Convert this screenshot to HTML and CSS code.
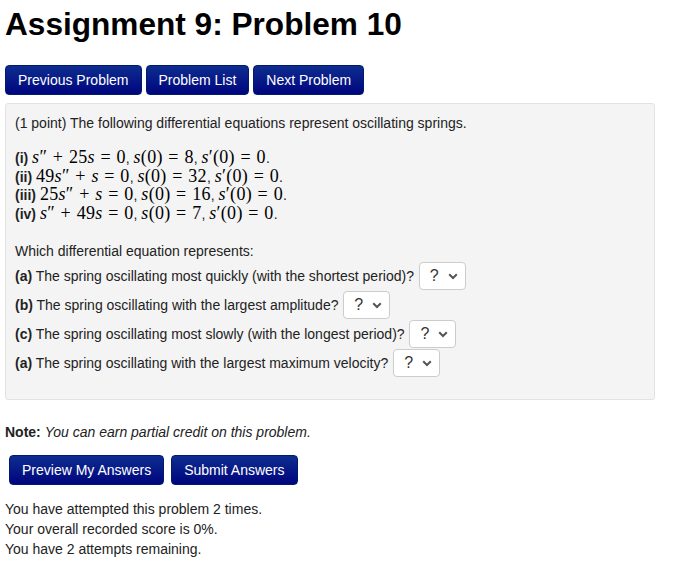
FILE: index.html
```html
<!DOCTYPE html>
<html>
<head>
<meta charset="utf-8">
<link rel="stylesheet" href="styles.css">
</head>
<body>
<div class="page">
  <h1 class="title">Assignment 9: Problem 10</h1>
  <div class="nav">
    <a class="btn">Previous Problem</a>
    <a class="btn">Problem List</a>
    <a class="btn">Next Problem</a>
  </div>
  <div class="problem">
    <p class="intro">(1 point) The following differential equations represent oscillating springs.</p>
    <div class="eqs">
      <div class="eq"><b>(i)</b> <span class="m"><i>s</i>″<span class="o">+</span>25<i>s</i><span class="o">=</span>0</span>, <span class="m"><i>s</i>(0)<span class="o">=</span>8</span>, <span class="m"><i>s</i>′(0)<span class="o">=</span>0</span>.</div>
      <div class="eq"><b>(ii)</b> <span class="m">49<i>s</i>″<span class="o">+</span><i>s</i><span class="o">=</span>0</span>, <span class="m"><i>s</i>(0)<span class="o">=</span>32</span>, <span class="m"><i>s</i>′(0)<span class="o">=</span>0</span>.</div>
      <div class="eq"><b>(iii)</b> <span class="m">25<i>s</i>″<span class="o">+</span><i>s</i><span class="o">=</span>0</span>, <span class="m"><i>s</i>(0)<span class="o">=</span>16</span>, <span class="m"><i>s</i>′(0)<span class="o">=</span>0</span>.</div>
      <div class="eq"><b>(iv)</b> <span class="m"><i>s</i>″<span class="o">+</span>49<i>s</i><span class="o">=</span>0</span>, <span class="m"><i>s</i>(0)<span class="o">=</span>7</span>, <span class="m"><i>s</i>′(0)<span class="o">=</span>0</span>.</div>
    </div>
    <p class="which">Which differential equation represents:</p>
    <div class="q"><b>(a)</b> The spring oscillating most quickly (with the shortest period)? <span class="sel">?<svg width="10" height="7" viewBox="0 0 10 7"><path d="M1.2 1.2 L5 5 L8.8 1.2" fill="none" stroke="#555" stroke-width="2"/></svg></span></div>
    <div class="q"><b>(b)</b> The spring oscillating with the largest amplitude? <span class="sel">?<svg width="10" height="7" viewBox="0 0 10 7"><path d="M1.2 1.2 L5 5 L8.8 1.2" fill="none" stroke="#555" stroke-width="2"/></svg></span></div>
    <div class="q"><b>(c)</b> The spring oscillating most slowly (with the longest period)? <span class="sel">?<svg width="10" height="7" viewBox="0 0 10 7"><path d="M1.2 1.2 L5 5 L8.8 1.2" fill="none" stroke="#555" stroke-width="2"/></svg></span></div>
    <div class="q"><b>(a)</b> The spring oscillating with the largest maximum velocity? <span class="sel">?<svg width="10" height="7" viewBox="0 0 10 7"><path d="M1.2 1.2 L5 5 L8.8 1.2" fill="none" stroke="#555" stroke-width="2"/></svg></span></div>
  </div>
  <p class="note"><b>Note:</b> <i>You can earn partial credit on this problem.</i></p>
  <div class="actions">
    <a class="btn">Preview My Answers</a>
    <a class="btn">Submit Answers</a>
  </div>
  <div class="status">
    <div>You have attempted this problem 2 times.</div>
    <div>Your overall recorded score is 0%.</div>
    <div>You have 2 attempts remaining.</div>
  </div>
</div>
</body>
</html>
```
FILE: styles.css
```css
html, body {
  margin: 0;
  padding: 0;
  background: #fff;
}
body {
  font-family: "Liberation Sans", Arial, sans-serif;
  font-size: 14px;
  color: #222;
}
.page {
  padding: 0 0 0 5px;
  width: 650px;
}
.title {
  margin: 0;
  padding-top: 5px;
  font-size: 31.6px;
  line-height: 38px;
  font-weight: bold;
  color: #000;
}
.nav {
  margin-top: 22px;
  display: flex;
  gap: 4px;
}
.btn {
  display: inline-block;
  height: 30px;
  padding: 0 12px;
  box-sizing: border-box;
  color: #fff;
  font-size: 14px;
  border-radius: 4px;
  background: linear-gradient(#0e2d8f, #00057e);
  border: 1px solid #001a6e;
  line-height: 28px;
  white-space: nowrap;
}
.problem {
  margin-top: 8px;
  background: #f4f4f4;
  border: 1px solid #e2e2e2;
  border-radius: 3px;
  padding: 9px 9px 22px;
  height: 297px;
  box-sizing: border-box;
}
.intro {
  margin: 0;
  line-height: 20px;
}
.eqs {
  margin-top: 15px;
}
.eq {
  height: 18.5px;
  line-height: 18.5px;
  white-space: nowrap;
}
.m {
  font-family: "Liberation Serif", "Times New Roman", serif;
  font-size: 18px;
  color: #000;
  letter-spacing: 0.3px;
}
.m i {
  font-style: italic;
}
.o {
  padding: 0 5.6px;
}
.which {
  margin: 19px 0 0;
  line-height: 20px;
}
.q {
  height: 28px;
  margin-top: 1px;
  display: flex;
  align-items: center;
  white-space: pre;
}
.sel {
  display: inline-flex;
  align-items: center;
  justify-content: space-between;
  box-sizing: border-box;
  width: 47px;
  height: 28px;
  margin-left: 1px;
  padding: 0 7px 0 10px;
  background: #fff;
  border: 1px solid #ccc;
  border-radius: 4px;
  font-size: 16px;
  color: #333;
}
.note {
  margin: 24px 0 0;
  line-height: 16px;
}
.actions {
  margin-top: 15px;
  padding-left: 4px;
  display: flex;
  gap: 7px;
}
.status {
  margin-top: 14px;
  line-height: 20px;
  color: #222;
}
```
